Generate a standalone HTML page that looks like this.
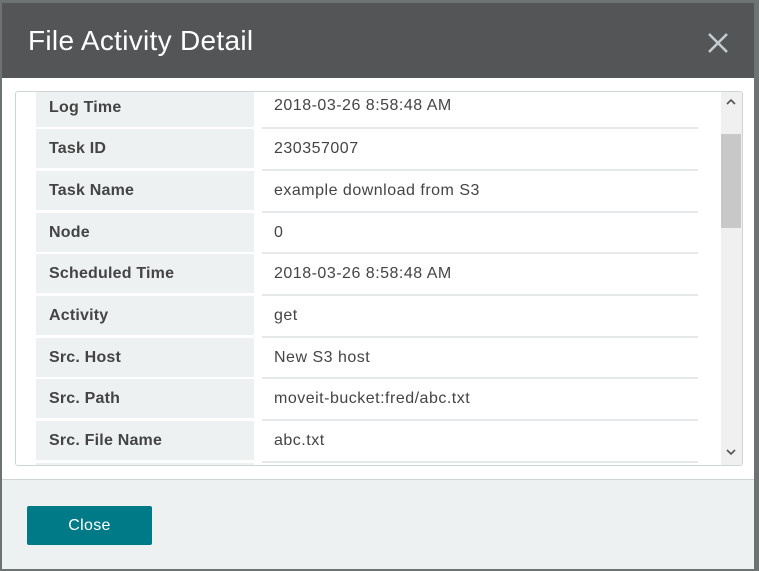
<!DOCTYPE html>
<html><head><meta charset="utf-8"><style>
*{margin:0;padding:0;box-sizing:border-box}
body{width:759px;height:571px;background:#6d7272;font-family:"Liberation Sans",sans-serif;position:relative;overflow:hidden}
.dlg{position:absolute;left:2px;top:3px;width:752px;height:566px;background:#fff}
.hdr{position:absolute;left:0;top:0;width:752px;height:75px;background:#535557}
.hdr h1{position:absolute;left:26px;top:22px;font-size:28px;font-weight:normal;color:#fff;letter-spacing:0.3px}
.x{position:absolute;left:705px;top:29px}
.ftr{position:absolute;left:0;top:476px;width:752px;height:90px;background:#eef1f2;border-top:1px solid #cfd5d6}
.btn{position:absolute;left:25px;top:26px;width:125px;height:39px;background:#007a87;border-radius:2px;color:#fff;font-size:16px;letter-spacing:0.3px;text-align:center;line-height:39px}
.box{position:absolute;left:13px;top:88px;width:728px;height:375px;border:1px solid #cfd5d6;border-radius:3px;overflow:hidden}
.lab{position:absolute;left:20px;width:218px;height:39px;background:#eef1f2;font-weight:bold;color:#444;font-size:16px;letter-spacing:0.2px;padding-left:13px;line-height:39px}
.val{position:absolute;left:246px;width:436px;height:42px;color:#444;font-size:16px;letter-spacing:0.5px;padding-left:12px;line-height:40px;border-top:2px solid #e6e8e9}
.sb{position:absolute;left:705px;top:0;width:21px;height:373px;background:#f0f0f0}
.th{position:absolute;left:0;top:42px;width:20px;height:94px;background:#c8c8c8}
</style></head><body>
<div class="dlg">
<div class="hdr"><h1>File Activity Detail</h1>
<svg class="x" width="22" height="22" viewBox="0 0 22 22"><path d="M2 2L20 20M20 2L2 20" stroke="#c5ccd0" stroke-width="2.6"/></svg></div>
<div class="box">
<div class="lab" style="top:-4px">Log Time</div><div class="val" style="top:-6px;border-top:none">2018-03-26 8:58:48 AM</div>
<div class="lab" style="top:37px">Task ID</div><div class="val" style="top:35px">230357007</div>
<div class="lab" style="top:79px">Task Name</div><div class="val" style="top:77px">example download from S3</div>
<div class="lab" style="top:121px">Node</div><div class="val" style="top:119px">0</div>
<div class="lab" style="top:162px">Scheduled Time</div><div class="val" style="top:160px">2018-03-26 8:58:48 AM</div>
<div class="lab" style="top:204px">Activity</div><div class="val" style="top:202px">get</div>
<div class="lab" style="top:246px">Src. Host</div><div class="val" style="top:244px">New S3 host</div>
<div class="lab" style="top:287px">Src. Path</div><div class="val" style="top:285px">moveit-bucket:fred/abc.txt</div>
<div class="lab" style="top:329px">Src. File Name</div><div class="val" style="top:327px">abc.txt</div>
<div class="lab" style="top:371px"></div><div class="val" style="top:369px"></div>
<div class="sb"><div class="th"></div>
<svg style="position:absolute;left:5px;top:7px" width="10" height="6"><path d="M1 5L5 1L9 5" stroke="#555" stroke-width="1.6" fill="none"/></svg>
<svg style="position:absolute;left:5px;top:357px" width="10" height="6"><path d="M1 1L5 5L9 1" stroke="#555" stroke-width="1.6" fill="none"/></svg>
</div>
</div>
<div class="ftr"><div class="btn">Close</div></div>
</div>
</body></html>
